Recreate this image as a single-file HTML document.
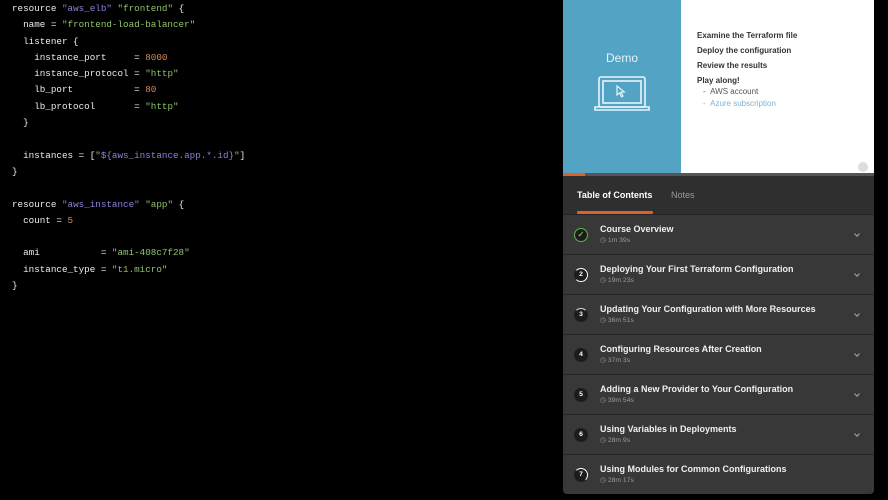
<!DOCTYPE html>
<html><head><meta charset="utf-8"><style>
*{margin:0;padding:0;box-sizing:border-box}
body{width:888px;height:500px;background:#000;overflow:hidden;position:relative;font-family:"Liberation Sans",sans-serif}
pre{position:absolute;left:12px;top:1px;font-family:"Liberation Mono",monospace;font-size:9.25px;line-height:16.3px;color:#ededed}
.s{color:#8fc46a}.n{color:#d9895a}.p{color:#8a84d8}
#panel{position:absolute;left:563px;top:0;width:311px;height:494px;background:#383838;border-radius:0 0 4px 4px;overflow:hidden}
#blue{position:absolute;left:0;top:0;width:118px;height:174px;background:#52a3c4}
#white{position:absolute;left:118px;top:0;width:193px;height:174px;background:#fff}
.demo{position:absolute;left:0;width:118px;top:51px;text-align:center;color:#e6f3f8;font-size:12px}
#white div{position:absolute;left:16px;font-size:8px;font-weight:bold;color:#333}
#white .sub{font-weight:normal;left:22px;color:#555}
#prog{position:absolute;top:173px;left:0;width:311px;height:3px;background:#555}
#tabs{position:absolute;top:176px;left:0;width:311px;height:38px;background:#2f2f2f}
.row{position:absolute;left:0;width:311px;height:39px;background:#383838;border-top:1px solid #262626}
.ic{position:absolute;left:11px;top:13px;width:14px;height:14px;border-radius:50%;background:#1c1c1c;color:#fff;font-size:6.8px;font-weight:bold;text-align:center;line-height:14px}
.t{position:absolute;left:37px;top:9px;color:#f0f0f0;font-size:9px;font-weight:bold}
.d{position:absolute;left:37px;top:21px;color:#9a9a9a;font-size:6.8px}
.ch{position:absolute;left:292px;top:17px;width:4px;height:4px;border-right:1px solid #aaa;border-bottom:1px solid #aaa;transform:rotate(45deg)}
</style></head><body>
<pre>resource <span class="p">"aws_elb"</span> <span class="s">"frontend"</span> {
  name = <span class="s">"frontend-load-balancer"</span>
  listener {
    instance_port     = <span class="n">8000</span>
    instance_protocol = <span class="s">"http"</span>
    lb_port           = <span class="n">80</span>
    lb_protocol       = <span class="s">"http"</span>
  }

  instances = [<span class="s">"</span><span class="p">${aws_instance.app.*.id}</span><span class="s">"</span>]
}

resource <span class="p">"aws_instance"</span> <span class="s">"app"</span> {
  count = <span class="n">5</span>

  ami           = <span class="s">"ami-408c7f28"</span>
  instance_type = <span class="s">"t1.micro"</span>
}</pre>
<div id="panel">
<div id="blue"><div class="demo">Demo</div>
<svg style="position:absolute;left:31px;top:76px" width="56" height="36" viewBox="0 0 56 36" fill="none" stroke="#eaf5fa" stroke-width="1.6"><rect x="5" y="1" width="46" height="30" rx="2"/><rect x="9" y="5" width="38" height="22"/><path d="M1 31h54v3H1z"/><path d="M23 10v9l2.5-2.2 2 4 1.5-.8-2-3.8 3.3-.3z" stroke-width="1.2"/></svg>
</div>
<div id="white">
<div style="top:31px">Examine the Terraform file</div>
<div style="top:46px">Deploy the configuration</div>
<div style="top:61px">Review the results</div>
<div style="top:76px">Play along!</div>
<div class="sub" style="top:87px">- &nbsp;AWS account</div>
<div class="sub" style="top:99px;color:#7ab4cf">- &nbsp;Azure subscription</div>
<div style="left:177px;top:162px;width:10px;height:10px;border-radius:50%;background:#ddd"></div>
</div>
<div id="prog"><div style="width:22px;height:3px;background:#e0602a"></div></div>
<div id="tabs">
<div style="position:absolute;left:14px;top:14px;color:#fff;font-weight:bold;font-size:9px">Table of Contents</div>
<div style="position:absolute;left:108px;top:14px;color:#999;font-size:9px">Notes</div>
<div style="position:absolute;left:14px;top:35px;width:76px;height:3px;background:#e0602a;border-radius:1px"></div>
</div>
<div class="row" style="top:214px"><div class="ic" style="border:1.5px solid #5cb84a;color:#6cc04a;line-height:11px;font-size:8px">✓</div><div class="t">Course Overview</div><div class="d">◷ 1m 39s</div><div class="ch"></div></div>
<div class="row" style="top:254px"><div class="ic" style="border:1.5px solid #fff;border-left-color:#1c1c1c;line-height:11px">2</div><div class="t">Deploying Your First Terraform Configuration</div><div class="d">◷ 19m 23s</div><div class="ch"></div></div>
<div class="row" style="top:294px"><div class="ic" style="border:1.5px solid #1c1c1c;border-top-color:#ddd;line-height:11px">3</div><div class="t">Updating Your Configuration with More Resources</div><div class="d">◷ 36m 51s</div><div class="ch"></div></div>
<div class="row" style="top:334px"><div class="ic">4</div><div class="t">Configuring Resources After Creation</div><div class="d">◷ 37m 3s</div><div class="ch"></div></div>
<div class="row" style="top:374px"><div class="ic">5</div><div class="t">Adding a New Provider to Your Configuration</div><div class="d">◷ 39m 54s</div><div class="ch"></div></div>
<div class="row" style="top:414px"><div class="ic">6</div><div class="t">Using Variables in Deployments</div><div class="d">◷ 28m 9s</div><div class="ch"></div></div>
<div class="row" style="top:454px"><div class="ic" style="border:1.5px solid #1c1c1c;border-top-color:#fff;border-right-color:#fff;line-height:11px">7</div><div class="t">Using Modules for Common Configurations</div><div class="d">◷ 28m 17s</div></div>
</div>
</body></html>
